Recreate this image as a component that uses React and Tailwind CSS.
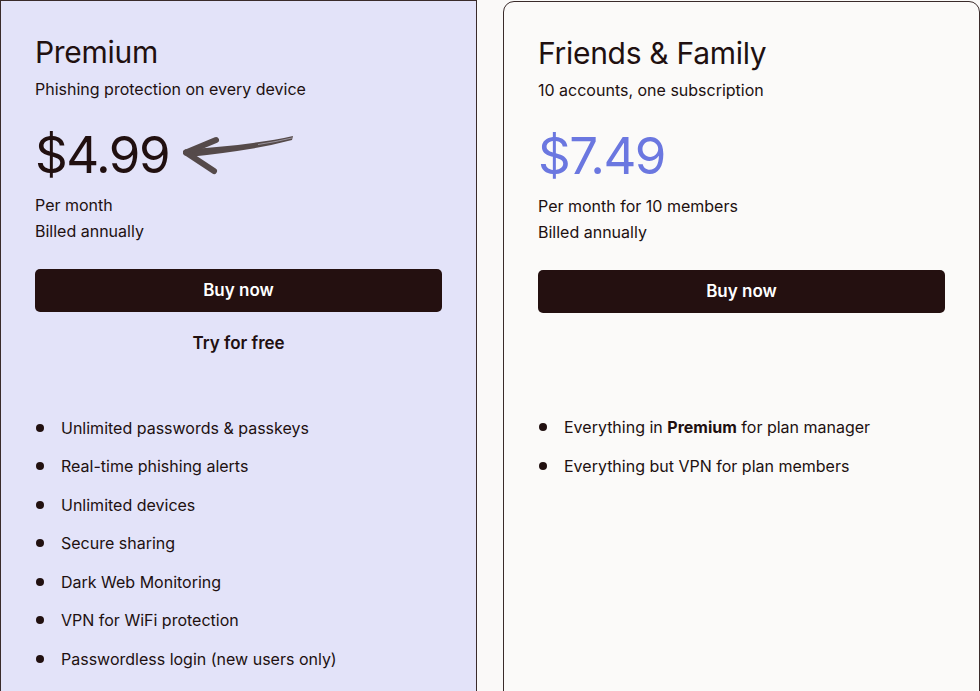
import React from 'react';

const premiumFeatures = [
    'Unlimited passwords & passkeys',
    'Real-time phishing alerts',
    'Unlimited devices',
    'Secure sharing',
    'Dark Web Monitoring',
    'VPN for WiFi protection',
    'Passwordless login (new users only)',
];

const BrushArrow = () => (
    <svg width="112" height="42" viewBox="0 0 112 42" className="shrink-0">
        {/* shaft, thick at the head and frayed towards the tail */}
        <path d="M6 15 Q40 13 70 9 Q92 6 110 2 L109 6 Q90 11 70 14.5 Q40 19.5 6 23 Z" fill="#554a4a" />
        <path d="M75 10.5 Q92 8 109 4" stroke="#e3e3f9" strokeWidth="0.6" fill="none" opacity="0.8" />
        {/* head */}
        <path d="M3 18.5 L33 6" stroke="#554a4a" strokeWidth="6" strokeLinecap="round" fill="none" />
        <path d="M3 18.5 L31 37" stroke="#554a4a" strokeWidth="6" strokeLinecap="round" fill="none" />
    </svg>
);

const Bullet = ({ children }) => (
    <li className="flex items-center h-[38.5px]">
        <span className="w-[8px] h-[8px] rounded-full bg-[#211010] ml-[1px] mr-[17px] shrink-0" />
        <span>{children}</span>
    </li>
);

const BuyButton = () => (
    <button className="w-full h-[43px] rounded-[5px] bg-[#241010] text-white text-[17px] font-semibold">
        Buy now
    </button>
);

export default function App() {
    return (
        <div
            className="w-[980px] h-[691px] overflow-hidden bg-[#faf9f8] flex gap-[26px] text-[#211010]"
            style={{ fontFamily: 'Inter, "Liberation Sans", sans-serif' }}
        >
            {/* Premium card */}
            <div className="w-[477px] h-[720px] shrink-0 bg-[#e3e3f9] border border-[#3a2b2b] px-[34px] pt-[32px]">
                <h2 className="text-[30px] leading-[38px] font-normal tracking-[-0.3px]">Premium</h2>
                <p className="text-[16px] leading-[24px] mt-[6px]">Phishing protection on every device</p>
                <div className="flex items-center gap-[14px] mt-[24px]">
                    <span className="text-[51px] leading-[60px] tracking-[-1.5px]">$4.99</span>
                    <BrushArrow />
                </div>
                <p className="text-[16px] leading-[26px] mt-[7px]">Per month</p>
                <p className="text-[16px] leading-[26px]">Billed annually</p>
                <div className="mt-[25px]">
                    <BuyButton />
                </div>
                <p className="text-center text-[17px] font-semibold mt-[19px]">Try for free</p>
                <ul className="mt-[52px] text-[16px]">
                    {premiumFeatures.map(f => (
                        <Bullet key={f}>{f}</Bullet>
                    ))}
                </ul>
            </div>

            {/* Friends & Family card */}
            <div className="w-[477px] h-[720px] shrink-0 mt-px bg-[#fbfaf9] border border-[#3a2b2b] rounded-[11px] px-[34px] pt-[32px]">
                <h2 className="text-[30px] leading-[38px] font-normal tracking-[-0.3px]">Friends &amp; Family</h2>
                <p className="text-[16px] leading-[24px] mt-[6px]">10 accounts, one subscription</p>
                <div className="flex items-center mt-[24px]">
                    <span className="text-[51px] leading-[60px] tracking-[-1.5px] text-[#6b77e0]">$7.49</span>
                </div>
                <p className="text-[16px] leading-[26px] mt-[7px]">Per month for 10 members</p>
                <p className="text-[16px] leading-[26px]">Billed annually</p>
                <div className="mt-[25px]">
                    <BuyButton />
                </div>
                <ul className="mt-[95px] text-[16px]">
                    <Bullet>
                        Everything in <span className="font-bold">Premium</span> for plan manager
                    </Bullet>
                    <Bullet>Everything but VPN for plan members</Bullet>
                </ul>
            </div>
        </div>
    );
}
